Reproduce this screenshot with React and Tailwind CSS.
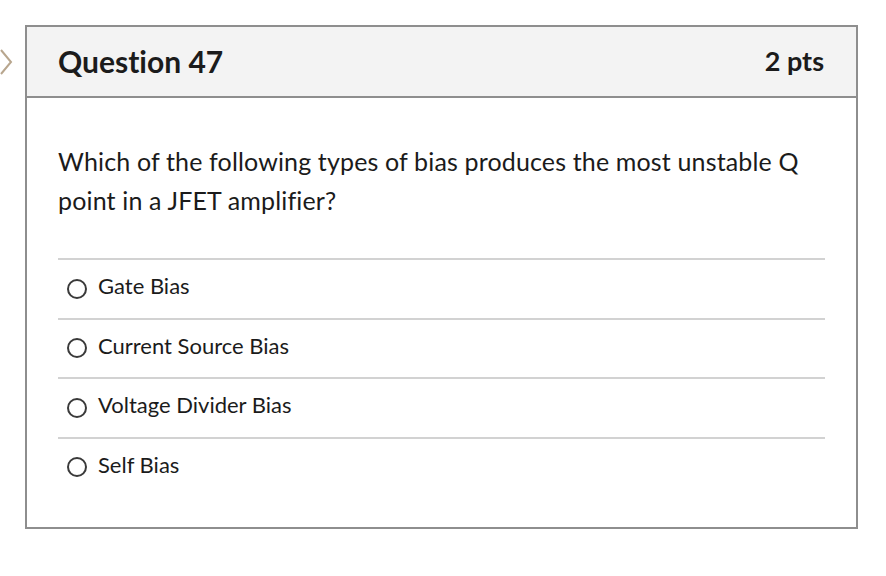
const options = ['Gate Bias', 'Current Source Bias', 'Voltage Divider Bias', 'Self Bias']

export default function App() {
  return (
    <div className="w-[886px] h-[576px] bg-white relative font-['Lato',sans-serif] text-[#1b1b1b] [font-variant-ligatures:none]">
      {/* pin chevron to the left of the card */}
      <svg className="absolute left-0 top-[49px]" width="14" height="26" viewBox="0 0 14 26">
        <path d="M1 1 L11 13 L1 25" fill="none" stroke="#b8a68e" strokeWidth="2" />
      </svg>

      <div className="absolute left-[25px] top-[25px] w-[833px] border-2 border-[#8e8e8e]">
        <div className="h-[71px] bg-[#f3f3f3] border-b-2 border-[#8e8e8e] flex items-center justify-between pl-[31px] pr-[32px]">
          <h2 className="text-[30px] font-bold">Question 47</h2>
          <span className="text-[27px] font-bold">2 pts</span>
        </div>

        <div className="px-[31px] pt-[44px] pb-[31px]">
          <p className="text-[25px] leading-[39px] tracking-[0.15px] pr-[10px]">
            Which of the following types of bias produces the most unstable Q point in a JFET amplifier?
          </p>

          <div className="mt-[38px]">
            {options.map((o) => (
              <label key={o} className="flex items-center h-[59.5px] border-t-2 border-[#d2d2d2]">
                <span className="ml-[9px] w-[20px] h-[20px] rounded-full border-2 border-[#3a3a3a] bg-white" />
                <span className="ml-[11px] text-[22px] -mt-[6px]">{o}</span>
              </label>
            ))}
          </div>
        </div>
      </div>
    </div>
  )
}
